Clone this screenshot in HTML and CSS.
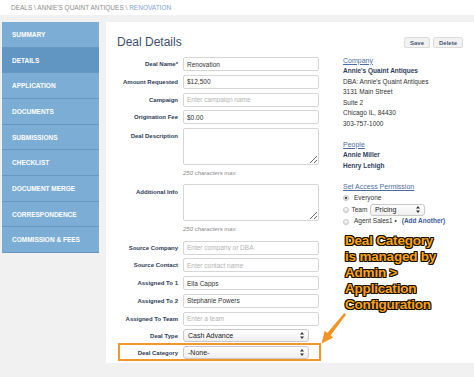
FILE: index.html
```html
<!doctype html>
<html lang="en">

<head>
  <title>Deal Details - Renovation</title>
  <meta charset="utf-8" />
  <link rel="stylesheet" href="styles.css">
</head>

<body>
  <div class="crumbs">DEALS \ ANNIE'S QUAINT ANTIQUES \ <span class="crumb-current">RENOVATION</span></div>

  <div class="layout">
    <nav class="tabs">
      <a class="tab">SUMMARY</a>
      <a class="tab active">DETAILS</a>
      <a class="tab">APPLICATION</a>
      <a class="tab">DOCUMENTS</a>
      <a class="tab">SUBMISSIONS</a>
      <a class="tab">CHECKLIST</a>
      <a class="tab">DOCUMENT MERGE</a>
      <a class="tab">CORRESPONDENCE</a>
      <a class="tab">COMMISSION &amp; FEES</a>
    </nav>

    <main class="panel">
      <form class="deal-form">
        <h1 class="title">Deal Details</h1>

        <label class="row"><span class="lbl">Deal Name*</span><input class="field" value="Renovation" /></label>
        <label class="row"><span class="lbl">Amount Requested</span><input class="field" value="$12,500" /></label>
        <label class="row"><span class="lbl">Campaign</span><input class="field" placeholder="Enter campaign name" /></label>
        <label class="row"><span class="lbl">Origination Fee</span><input class="field" value="$0.00" /></label>

        <label class="row row-tall"><span class="lbl">Deal Description</span><textarea class="field area"></textarea></label>
        <p class="help">250 characters max</p>
        <label class="row row-tall"><span class="lbl">Additional Info</span><textarea class="field area"></textarea></label>
        <p class="help">250 characters max</p>

        <label class="row"><span class="lbl">Source Company</span><input class="field" placeholder="Enter company or DBA" /></label>
        <label class="row"><span class="lbl">Source Contact</span><input class="field" placeholder="Enter contact name" /></label>
        <label class="row"><span class="lbl">Assigned To 1</span><input class="field" value="Ella Capps" /></label>
        <label class="row"><span class="lbl">Assigned To 2</span><input class="field" value="Stephanie Powers" /></label>
        <label class="row"><span class="lbl">Assigned To Team</span><input class="field" placeholder="Enter a team" /></label>

        <div class="row">
          <span class="lbl">Deal Type</span>
          <div class="select">
            <span>Cash Advance</span>
            <svg viewBox="0 0 4 7" width="4" height="7"><path d="M2 0 4 2.6H0Z M0 4.4H4L2 7Z" fill="#333"/></svg>
          </div>
        </div>
        <div class="row row-marked">
          <span class="lbl">Deal Category</span>
          <div class="select">
            <span>-None-</span>
            <svg viewBox="0 0 4 7" width="4" height="7"><path d="M2 0 4 2.6H0Z M0 4.4H4L2 7Z" fill="#333"/></svg>
          </div>
        </div>
      </form>

      <aside class="side">
        <div class="actions">
          <button class="btn" type="button">Save</button>
          <button class="btn" type="button">Delete</button>
        </div>

        <h2 class="side-title">Company</h2>
        <div class="strong">Annie's Quaint Antiques</div>
        <div>DBA: Annie's Quaint Antiques</div>
        <div>3131 Main Street</div>
        <div>Suite 2</div>
        <div>Chicago IL, 84430</div>
        <div>303-757-1000</div>

        <h2 class="side-title gap">People</h2>
        <div class="strong">Annie Miller</div>
        <div class="strong">Henry Lehigh</div>

        <h2 class="side-title gap">Set Access Permission</h2>
        <label class="perm"><input type="radio" name="perm" checked /> Everyone</label>
        <label class="perm perm-team"><input type="radio" name="perm" /> Team
          <span class="select select-small">
            <span>Pricing</span>
            <svg viewBox="0 0 4 7" width="4" height="7"><path d="M2 0 4 2.6H0Z M0 4.4H4L2 7Z" fill="#333"/></svg>
          </span>
        </label>
        <label class="perm"><input type="radio" name="perm" /> Agent Sales1 &bull; <a class="add-link">(Add Another)</a></label>
      </aside>
    </main>
  </div>

  <!-- screenshot callout -->
  <div class="note">Deal Category<br />is managed by<br />Admin &gt;<br />Application<br />Configuration</div>
  <svg class="note-arrow" viewBox="0 0 34 38" width="34" height="38">
    <path d="M28.2 5.4 29.8 6.6 14.2 27.5 16.7 29.5 6 35 8.9 23.3 11.4 25.3Z" fill="#f7931e" stroke="#e07f10" stroke-width="0.5" stroke-linejoin="round"/>
  </svg>
</body>

</html>
```

FILE: styles.css
```css
* {
  box-sizing: border-box;
}

body {
  margin: 0;
  background: #f1f1f1;
  font-family: "Liberation Sans", Arial, sans-serif;
  color: #333;
}

.crumbs {
  height: 15px;
  padding-left: 11px;
  background: #fff;
  color: #8d8d8d;
  font-size: 6.5px;
  line-height: 15px;
}

.crumb-current {
  color: #7fa2d9;
}

.layout {
  display: flex;
  align-items: flex-start;
  padding: 7px 0 0 2px;
}

/* left tab list */
.tabs {
  flex: none;
  width: 97px;
}

.tab {
  display: block;
  height: 25.67px;
  padding-left: 10px;
  border-bottom: 1px solid #6896bd;
  background: #7cadd4;
  color: #fff;
  font-size: 6.5px;
  font-weight: bold;
  line-height: 25px;
}

.tab.active {
  background: #6196c3;
}

/* white card */
.panel {
  flex: 1;
  display: flex;
  height: 341px;
  margin-left: 7px;
  padding: 0 11px;
  background: #fff;
}

.deal-form {
  flex: none;
  width: 202px;
}

.title {
  margin: 13px 0 8px;
  color: #3d4f6c;
  font-size: 12px;
  font-weight: normal;
  line-height: 14px;
}

.row {
  display: grid;
  grid-template-columns: 61px 136px;
  column-gap: 5px;
  align-items: center;
  margin-bottom: 3.75px;
}

.row-tall {
  align-items: start;
}

.row-tall .lbl {
  padding-top: 4px;
}

.lbl {
  color: #2d3c58;
  font-size: 6px;
  font-weight: bold;
  line-height: 8px;
  text-align: right;
  white-space: nowrap;
}

.field {
  width: 136px;
  height: 14px;
  padding: 0 3px;
  border: 1px solid #d6d6d6;
  border-radius: 2px;
  background: #fff;
  color: #333;
  font: 6.5px "Liberation Sans", Arial, sans-serif;
}

.field::placeholder {
  color: #b3b3b3;
}

.area {
  display: block;
  height: 37px;
  resize: vertical;
}

.help {
  margin: 0 0 6.5px 66px;
  color: #8a8a8a;
  font-size: 6px;
  font-style: italic;
  line-height: 9px;
}

.select {
  display: flex;
  align-items: center;
  justify-content: space-between;
  width: 126px;
  height: 13px;
  padding: 0 4px;
  border: 1px solid #c9c9c9;
  border-radius: 3px;
  background: linear-gradient(#fff, #eeeeee);
  color: #222;
  font-size: 7px;
  line-height: 11px;
}

.row-marked {
  position: relative;
}

.row-marked::after {
  content: "";
  position: absolute;
  top: -3.5px;
  bottom: -2px;
  left: 1px;
  right: -2px;
  border: 2px solid #f5962a;
}

/* right column */
.side {
  flex: 1;
  margin-left: 24px;
  color: #333;
  font-size: 6.5px;
  line-height: 10.5px;
}

.actions {
  display: flex;
  justify-content: flex-end;
  gap: 3px;
  margin-top: 15px;
}

.btn {
  height: 11px;
  padding: 0 5px;
  border: 1px solid #dcdcdc;
  border-radius: 2px;
  background: #f2f2f2;
  color: #4b5a74;
  font: bold 6px "Liberation Sans", Arial, sans-serif;
}

.side-title {
  margin: 7.75px 0 0;
  color: #4e6d9e;
  font-size: 7px;
  font-weight: normal;
  line-height: 10.5px;
  text-decoration: underline;
}

.side-title.gap {
  margin-top: 10.5px;
}

.strong {
  color: #2e3d5a;
  font-weight: bold;
}

.perm {
  display: flex;
  align-items: center;
  gap: 5px;
  height: 11.5px;
}

.perm-team {
  height: 12px;
  gap: 2.5px;
}

.perm-team input {
  margin-right: 2.5px;
}

.perm input {
  appearance: none;
  width: 6px;
  height: 6px;
  margin: 0;
  border: 1px solid #c4c4c4;
  border-radius: 50%;
  background: linear-gradient(#fdfdfd, #dedede);
}

.perm input:checked {
  background: radial-gradient(circle, #555 0 1.2px, #e6e6e6 1.6px);
}

.select-small {
  width: 55px;
  height: 12px;
}

.add-link {
  color: #3b5c9a;
  font-weight: bold;
}

/* callout drawn over the screenshot */
.note {
  position: absolute;
  top: 233px;
  left: 345px;
  color: #f7a21b;
  font-size: 13.5px;
  font-weight: bold;
  line-height: 16px;
  letter-spacing: -0.2px;
  text-shadow: -1px -1px 0 #1a1204, 1px -1px 0 #1a1204, -1px 1px 0 #1a1204, 1px 1px 0 #1a1204,
    0 -1px 0 #1a1204, 0 1px 0 #1a1204, -1px 0 0 #1a1204, 1px 0 0 #1a1204;
}

.note-arrow {
  position: absolute;
  top: 308px;
  left: 316px;
}
```
